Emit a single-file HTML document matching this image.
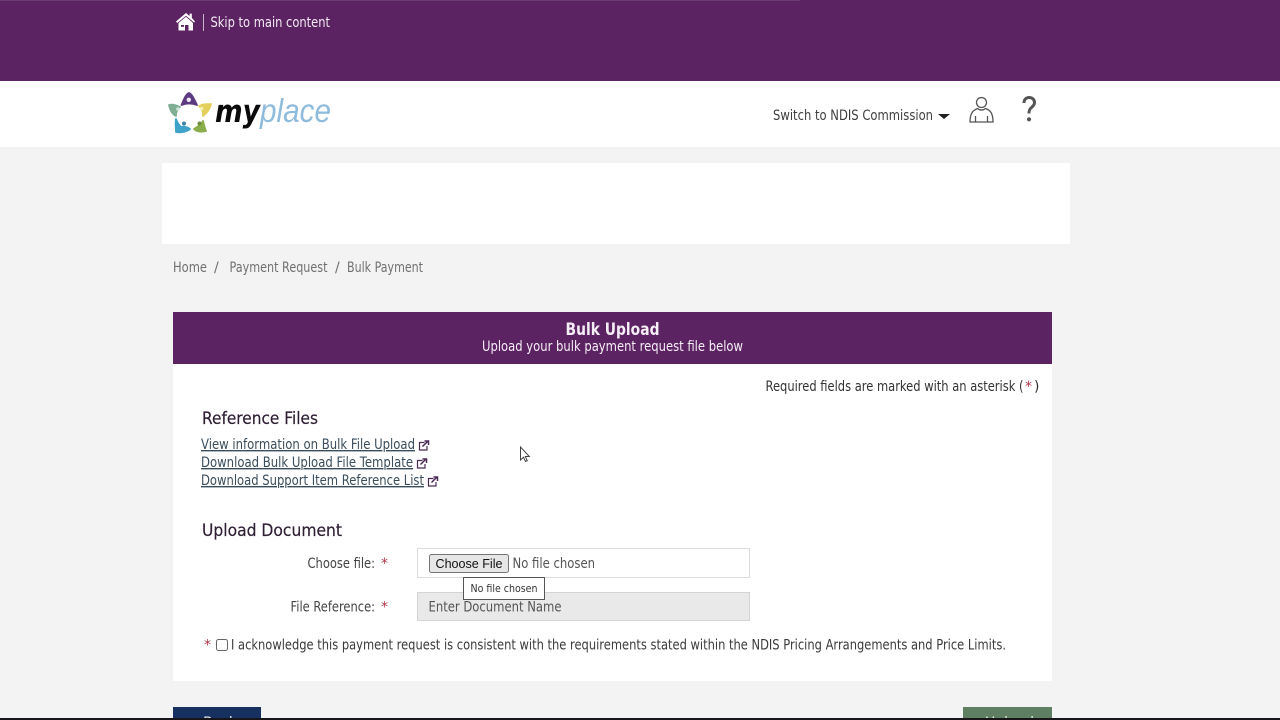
<!DOCTYPE html>
<html lang="en"><head><meta charset="utf-8"><title>Bulk Upload - myplace</title>
<style>
html,body{margin:0;padding:0;width:1280px;height:720px;overflow:hidden;background:#f4f3f4}
svg{position:absolute;left:0;top:0;display:block;filter:blur(.35px)}
text{font-family:"DejaVu Sans","Liberation Sans",sans-serif;font-size:14px}
</style></head><body>
<svg width="1280" height="720" viewBox="0 0 1280 720" xmlns="http://www.w3.org/2000/svg">
<rect width="1280" height="720" fill="#f4f3f4"/>
<rect width="1280" height="81" fill="#5c2362"/>
<rect y="0" width="800" height="1" fill="#6a3a70"/>
<rect y="81" width="1280" height="66" fill="#fff"/>
<rect x="162" y="163" width="908" height="81" fill="#fff"/>
<rect x="173" y="312" width="879" height="369" fill="#fff"/>
<rect x="173" y="312" width="879" height="52" fill="#5c2362"/>

<!-- home icon -->
<path d="M176 21.5 186 13l3.600 3v-2.400h2.200v4.300l3.200 3.600-1 1-8-6.800-8.800 7.300z" fill="#fff"/>
<path d="M178.500 23 186 16.700l7 6.300v7.500h-4.500v-5.500h-3.500v5.500h-6.500z" fill="#fff"/>
<rect x="181" y="25" width="3" height="1.800" fill="#5c2362"/>
<rect x="203" y="14" width="1" height="17" fill="#c9b4cc"/>
<text x="210.500" y="27" fill="#f3e9f4" textLength="119.500" lengthAdjust="spacingAndGlyphs">Skip to main content</text>

<!-- logo -->
<g stroke-width="1.800" stroke-linejoin="round">
<path d="M181.500 105C184 99 186 94 189 93 192 94 194 99 197 105 192 103 186 103 181.500 105z" fill="#5d3a82" stroke="#5d3a82"/>
<path d="M199 106C203 104 206 104 211 104 210 109 207 113 203 116 203 112 202 108 199 106z" fill="#e3d05c" stroke="#e3d05c"/>
<path d="M169 105C172 104 176 105 180 107 177 109 176 112 176 116 172 114 170 110 169 105z" fill="#7fae94" stroke="#7fae94"/>
<path d="M176 119C177 122 178 124 181 127 184 126 187 127 190 129 186 132 180 133 176 132 176 127 175 123 176 119z" fill="#3fa2c9" stroke="#3fa2c9"/>
<path d="M194 129C197 127 201 125 203 121 204 125 205 129 206 131 202 132 197 132 194 129z" fill="#8bae4c" stroke="#8bae4c"/>
</g>
<circle cx="188.800" cy="99.800" r="2.200" fill="#f1e9f5"/>
<circle cx="201.500" cy="108.500" r="1.800" fill="#f6eeb8"/>
<circle cx="178" cy="109" r="1.800" fill="#d4e6da"/>
<circle cx="184" cy="123.500" r="2" fill="#3c87a5"/>
<circle cx="199.500" cy="123.500" r="2" fill="#6f8f3c"/>
<text x="215" y="122" style="font-family:'DejaVu Sans',sans-serif;font-size:31px;font-weight:700;font-style:italic" fill="#0b0b0b" textLength="45" lengthAdjust="spacingAndGlyphs">my</text>
<text x="260" y="122" style="font-family:'Liberation Sans',sans-serif;font-size:33px;font-style:italic" fill="#8fbcdc" textLength="71" lengthAdjust="spacingAndGlyphs">place</text>

<!-- header right -->
<text x="773" y="120" fill="#3f3f3f" textLength="160" lengthAdjust="spacingAndGlyphs">Switch to NDIS Commission</text>
<path d="M938 114h12l-6 5z" fill="#222"/>
<g fill="none" stroke="#555" stroke-width="1.300">
<circle cx="981.500" cy="102.500" r="5"/>
<path d="M970 122c0-10 4-12 7.500-13.500 2.500 2 5.500 2 8 0 4 1.500 7.500 3.500 7.500 13.500z"/>
<path d="M975.500 122v-6M987.500 122v-6"/>
</g>
<path d="M1024 103c0-3.500 2.200-5.500 5.200-5.500s5.300 2 5.300 5c0 2.800-1.800 4-3.300 5.300-1.700 1.500-2.200 2.700-2.200 5.700" fill="none" stroke="#555" stroke-width="3"/>
<circle cx="1029" cy="119.300" r="2.100" fill="#555"/>

<!-- breadcrumb -->
<g fill="#707070">
<text x="173" y="272" textLength="34" lengthAdjust="spacingAndGlyphs">Home</text>
<text x="214" y="272">/</text>
<text x="229.500" y="272" textLength="98" lengthAdjust="spacingAndGlyphs">Payment Request</text>
<text x="335" y="272">/</text>
<text x="347" y="272" textLength="76" lengthAdjust="spacingAndGlyphs">Bulk Payment</text>
</g>

<!-- panel heading -->
<text x="565.500" y="335" style="font-size:16.500px;font-weight:700" fill="#f6eef7" textLength="94" lengthAdjust="spacingAndGlyphs">Bulk Upload</text>
<text x="482" y="351" fill="#f6eef7" textLength="261" lengthAdjust="spacingAndGlyphs">Upload your bulk payment request file below</text>

<text x="765.500" y="391" fill="#333" textLength="258" lengthAdjust="spacingAndGlyphs">Required fields are marked with an asterisk (</text>
<text x="1025" y="391" fill="#b5354c">*</text>
<text x="1034" y="391" fill="#333">)</text>

<text x="202" y="424" style="font-size:17px" fill="#2e1f33" stroke="#2e1f33" stroke-width=".2" textLength="116" lengthAdjust="spacingAndGlyphs">Reference Files</text>

<g fill="#3a4d5c" text-decoration="underline">
<text x="201" y="449" textLength="214" lengthAdjust="spacingAndGlyphs">View information on Bulk File Upload</text>
<text x="201" y="467" textLength="212" lengthAdjust="spacingAndGlyphs">Download Bulk Upload File Template</text>
<text x="201" y="485" textLength="223" lengthAdjust="spacingAndGlyphs">Download Support Item Reference List</text>
</g>
<g fill="none" stroke="#4a2a55" stroke-width="1.200">
<path d="M424.500 442.500h-5v7.500h7.500v-4"/>
<path d="M422.500 446.500l5-5M424.500 441h4v4" stroke-width="1.500"/>
<path d="M422.500 460.500h-5v7.500h7.500v-4"/>
<path d="M420.500 464.500l5-5M422.500 459h4v4" stroke-width="1.500"/>
<path d="M433.500 478.500h-5v7.500h7.500v-4"/>
<path d="M431.500 482.500l5-5M433.500 477h4v4" stroke-width="1.500"/>
</g>

<!-- cursor -->
<path d="M520.500 447v13l3-2.800 2 4.300 1.800-.8-2-4.200h4z" fill="#fff" stroke="#444" stroke-width="1"/>

<text x="202" y="536" style="font-size:17px" fill="#2e1f33" stroke="#2e1f33" stroke-width=".2" textLength="140" lengthAdjust="spacingAndGlyphs">Upload Document</text>

<!-- form -->
<text x="307.500" y="568" fill="#444" textLength="67.500" lengthAdjust="spacingAndGlyphs">Choose file:</text>
<text x="381" y="568" fill="#b5354c">*</text>
<rect x="417.500" y="548.500" width="332" height="29" fill="#fff" stroke="#dcdcdc"/>
<rect x="429.500" y="554.500" width="79" height="18" rx="2" fill="#e6e6e6" stroke="#767676"/>
<text x="435.500" y="568" style="font-family:'Liberation Sans',sans-serif;font-size:13.300px" fill="#111" textLength="67" lengthAdjust="spacingAndGlyphs">Choose File</text>
<text x="512.500" y="568" fill="#555" textLength="82.500" lengthAdjust="spacingAndGlyphs">No file chosen</text>

<text x="290.500" y="611.500" fill="#444" textLength="84.500" lengthAdjust="spacingAndGlyphs">File Reference:</text>
<text x="381" y="611.500" fill="#b5354c">*</text>
<rect x="417.500" y="592.500" width="332" height="28" fill="#e9e9e9" stroke="#d4d4d4"/>
<text x="428.500" y="611.500" fill="#555" textLength="133" lengthAdjust="spacingAndGlyphs">Enter Document Name</text>

<rect x="463.500" y="577.500" width="81" height="22" fill="#fff" stroke="#555"/>
<text x="470.500" y="592" style="font-size:11px" fill="#333" textLength="67" lengthAdjust="spacingAndGlyphs">No file chosen</text>

<text x="204" y="649.500" fill="#b5354c">*</text>
<rect x="216.500" y="639.500" width="11" height="11" rx="2" fill="#fff" stroke="#666"/>
<text x="231" y="649.500" fill="#3a3a3a" textLength="775" lengthAdjust="spacingAndGlyphs">I acknowledge this payment request is consistent with the requirements stated within the NDIS Pricing Arrangements and Price Limits.</text>

<!-- buttons -->
<rect x="173" y="707" width="88" height="13" fill="#16305f"/>
<text x="203" y="727" fill="#e8ecf3">Back</text>
<rect x="963" y="707" width="89" height="13" fill="#5f7f63"/>
<text x="985" y="727" fill="#e8efe9">Upload</text>
<rect y="718" width="1280" height="2" fill="#17141a"/>
</svg>
</body></html>
